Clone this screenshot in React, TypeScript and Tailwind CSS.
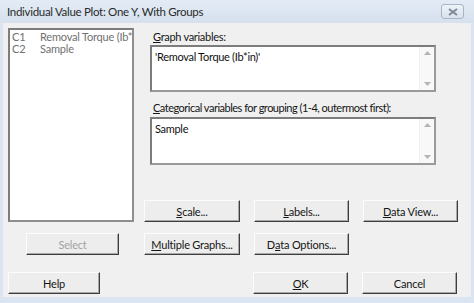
import React from "react";

const font = { fontFamily: 'Lato, "Liberation Sans", sans-serif' };

function Btn({
  children,
  className = "",
  disabled = false,
}: {
  children: React.ReactNode;
  className?: string;
  disabled?: boolean;
}) {
  return (
    <div
      className={`h-[22px] flex items-center justify-center whitespace-nowrap text-[11px] tracking-[-0.2px] leading-none bg-[#ededed] border-t border-l border-t-[#fcfcfc] border-l-[#fcfcfc] border-r border-b border-r-[#3e3e3e] border-b-[#3e3e3e] shadow-[inset_-1px_-1px_0_#a8a8a8] ${
        disabled ? "text-[#a3a3a3]" : "text-[#151515]"
      } ${className}`}
    >
      {children}
    </div>
  );
}

function TextField({ value, height }: { value: string; height: string }) {
  return (
    <div
      className={`${height} w-[286px] flex bg-white border-t-2 border-l-2 border-t-[#7c7c7c] border-l-[#7c7c7c] border-r-2 border-b-2 border-r-[#9a9a9a] border-b-[#9a9a9a]`}
    >
      <div className="flex-1 pl-[3px] pt-[3px] text-[11px] tracking-[-0.3px] leading-[13px] text-[#111]">{value}</div>
      <div className="w-[15px] bg-[#f8f8f8] border-l border-l-[#f0f0f0] flex flex-col items-center justify-between py-[4px]">
        <svg width="7" height="4" viewBox="0 0 7 4">
          <path d="M0 4 L3.5 0 L7 4 Z" fill="#b4b4b4" />
        </svg>
        <svg width="7" height="4" viewBox="0 0 7 4">
          <path d="M0 0 L3.5 4 L7 0 Z" fill="#b4b4b4" />
        </svg>
      </div>
    </div>
  );
}

export default function App() {
  return (
    <div style={font} className="w-[474px] h-[303px] bg-[#dbe5f1] flex flex-col overflow-hidden">
      {/* title bar */}
      <div className="h-[23px] flex items-center justify-between pl-[7px] pr-[10px] bg-gradient-to-b from-[#e3ebf5] to-[#d6e1ee]">
        <span className="text-[11.5px] tracking-[-0.3px] text-[#2a2a2a] leading-none">Individual Value Plot: One Y, With Groups</span>
        <div className="w-[23px] h-[15px] rounded-[3px] border border-[#a9b6c6] bg-gradient-to-b from-[#eef3f9] to-[#d8e1ec] flex items-center justify-center">
          <svg width="10" height="8" viewBox="0 0 10 8">
            <path d="M1 1 L9 7 M9 1 L1 7" stroke="#7d8795" strokeWidth="2" />
          </svg>
        </div>
      </div>

      {/* body */}
      <div className="mx-[3px] mb-[6px] flex-1 bg-[#f0f0f0] pl-[5px] pt-[5px] flex flex-col">
        <div className="flex">
          {/* list box */}
          <div className="w-[126px] h-[194px] overflow-hidden bg-white border-t-2 border-l-2 border-t-[#7c7c7c] border-l-[#7c7c7c] border-r-2 border-b-2 border-r-[#8e8e8e] border-b-[#8e8e8e] pl-[2px] pt-[1px] text-[11px] tracking-[-0.2px] leading-[12px] text-[#707070]">
            <div className="flex whitespace-nowrap">
              <span className="w-[28px] shrink-0">C1</span>
              <span>Removal Torque (Ib*</span>
            </div>
            <div className="flex whitespace-nowrap">
              <span className="w-[28px] shrink-0">C2</span>
              <span>Sample</span>
            </div>
          </div>

          {/* right column */}
          <div className="ml-[10px] flex flex-col">
            <div className="ml-[6px] flex flex-col">
              <div className="h-[16px] mt-[1px] pl-[3px] text-[11px] tracking-[-0.3px] leading-[16px] text-[#151515] whitespace-nowrap">
                <span className="underline">G</span>raph variables:
              </div>
              <TextField value="'Removal Torque (Ib*in)'" height="h-[47px]" />
              <div className="h-[16px] mt-[8px] mb-[1px] pl-[3px] text-[11px] tracking-[-0.5px] leading-[16px] text-[#151515] whitespace-nowrap">
                <span className="underline">C</span>ategorical variables for grouping (1-4, outermost first):
              </div>
              <TextField value="Sample" height="h-[48px]" />
            </div>
            <div className="mt-auto flex gap-[14px]">
              <Btn className="w-[96px]">
                <span className="underline">S</span>cale...
              </Btn>
              <Btn className="w-[95px]">
                <span className="underline">L</span>abels...
              </Btn>
              <Btn className="w-[95px]">
                <span className="underline">D</span>ata View...
              </Btn>
            </div>
          </div>
        </div>

        {/* row 2 */}
        <div className="flex mt-[11px]">
          <Btn disabled className="ml-[18px] w-[93px]">
            Select
          </Btn>
          <Btn className="ml-[25px] w-[96px]">
            <span className="underline">M</span>ultiple Graphs...
          </Btn>
          <Btn className="ml-[14px] w-[95px]">
            D<span className="underline">a</span>ta Options...
          </Btn>
        </div>

        {/* row 3 */}
        <div className="flex mt-[17px]">
          <Btn className="w-[92px]">Help</Btn>
          <Btn className="ml-[153px] w-[95px]">
            <span className="underline">O</span>K
          </Btn>
          <Btn className="ml-[14px] w-[95px]">Cancel</Btn>
        </div>
      </div>
    </div>
  );
}
